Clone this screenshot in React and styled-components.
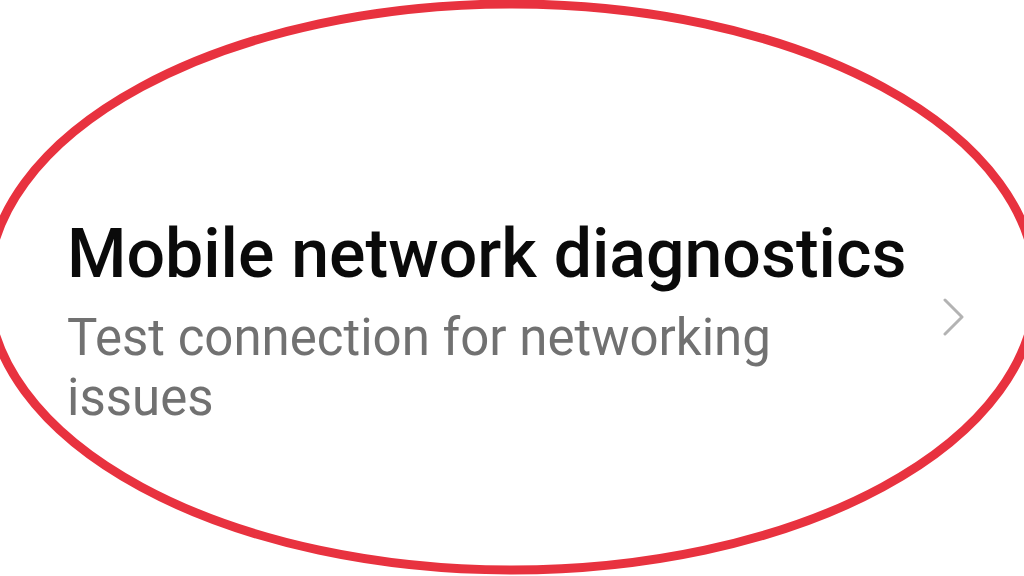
import React from "react";
import styled, { createGlobalStyle } from "styled-components";

const Global = createGlobalStyle`
  html, body { margin: 0; padding: 0; background: #ffffff; }
  body { font-family: Roboto, "Noto Sans", "Liberation Sans", sans-serif; }
`;

const Page = styled.div`
  position: relative;
  width: 1024px;
  height: 576px;
  overflow: hidden;
  background: #ffffff;
  display: flex;
  align-items: flex-start;
`;

const Row = styled.div`
  display: flex;
  align-items: center;
  width: 100%;
  padding: 213px 58px 0 67px;
  box-sizing: border-box;
  gap: 20px;
`;

const TextCol = styled.div`
  flex: 1;
  display: flex;
  flex-direction: column;
  gap: 13px;
`;

const Title = styled.div`
  font-size: 68px;
  line-height: 82px;
  font-weight: 500;
  color: #0a0a0a;
  white-space: nowrap;
`;

const Subtitle = styled.div`
  font-size: 51px;
  line-height: 60px;
  font-weight: 400;
  color: #717171;
  max-width: 740px;
`;

const Chevron = styled.svg`
  width: 24px;
  height: 38px;
  flex: none;
  align-self: flex-start;
  margin-top: 85px;
`;

const Ring = styled.svg`
  position: absolute;
  left: 0;
  top: 0;
  width: 1024px;
  height: 576px;
  pointer-events: none;
`;

export default function App() {
  return (
    <>
      <Global />
      <Page>
        <Row>
          <TextCol>
            <Title>Mobile network diagnostics</Title>
            <Subtitle>Test connection for networking issues</Subtitle>
          </TextCol>
          <Chevron viewBox="0 0 24 38">
            <path d="M3 2 L20 19 L3 36" fill="none" stroke="#b3b3b3" strokeWidth="3" strokeLinecap="round" strokeLinejoin="round" />
          </Chevron>
        </Row>
        <Ring viewBox="0 0 1024 576">
          <ellipse cx="512" cy="287" rx="524" ry="283" fill="none" stroke="#e8323f" strokeWidth="9" />
        </Ring>
      </Page>
    </>
  );
}
